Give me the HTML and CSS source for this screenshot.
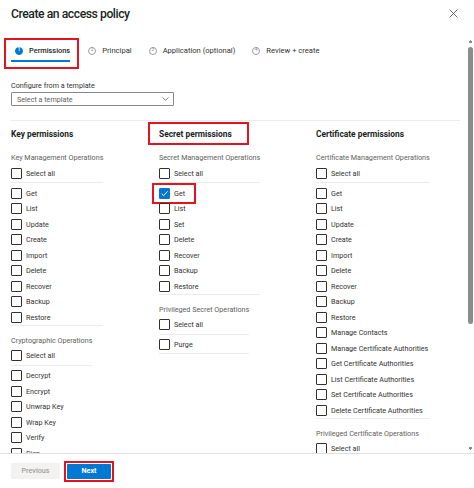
FILE: index.html
```html
<!DOCTYPE html>
<html lang="en">
<head>
<meta charset="utf-8">
<title>Create an access policy</title>
<link rel="stylesheet" href="styles.css">
</head>
<body>
<div class="dialog">
  <header class="header">
    <h1 class="title">Create an access policy</h1>
    <button class="close" aria-label="Close">
      <svg width="9" height="9" viewBox="0 0 9 9"><path d="M0.5 0.5 L8.5 8.5 M8.5 0.5 L0.5 8.5" stroke="#605e5c" stroke-width="0.9" fill="none"/></svg>
    </button>
  </header>

  <div class="body-area">
    <div class="scroll">
      <nav class="steps">
        <div class="mark step-mark">
          <div class="step active"><span class="num">1</span><span>Permissions</span></div>
        </div>
        <div class="step plain"><span class="num">2</span><span>Principal</span></div>
        <div class="step plain"><span class="num">3</span><span>Application (optional)</span></div>
        <div class="step plain"><span class="num">4</span><span>Review + create</span></div>
      </nav>

      <div class="template">
        <div class="field-label">Configure from a template</div>
        <div class="select">
          <span>Select a template</span>
          <svg width="7" height="4" viewBox="0 0 7 4"><path d="M0.5 0.5 L3.5 3.3 L6.5 0.5" stroke="#605e5c" stroke-width="0.8" fill="none"/></svg>
        </div>
      </div>

      <div class="divider"></div>

      <div class="perms">
        <section class="col">
          <div class="col-head"><h2>Key permissions</h2></div>
          <div class="group first">
            <div class="group-label">Key Management Operations</div>
            <div class="select-all"><div class="row"><span class="box"></span>Select all</div></div>
            <div class="list">
              <div class="row"><span class="box"></span>Get</div>
              <div class="row"><span class="box"></span>List</div>
              <div class="row"><span class="box"></span>Update</div>
              <div class="row"><span class="box"></span>Create</div>
              <div class="row"><span class="box"></span>Import</div>
              <div class="row"><span class="box"></span>Delete</div>
              <div class="row"><span class="box"></span>Recover</div>
              <div class="row"><span class="box"></span>Backup</div>
              <div class="row"><span class="box"></span>Restore</div>
            </div>
          </div>
          <div class="group">
            <div class="group-label">Cryptographic Operations</div>
            <div class="select-all"><div class="row"><span class="box"></span>Select all</div></div>
            <div class="list">
              <div class="row"><span class="box"></span>Decrypt</div>
              <div class="row"><span class="box"></span>Encrypt</div>
              <div class="row"><span class="box"></span>Unwrap Key</div>
              <div class="row"><span class="box"></span>Wrap Key</div>
              <div class="row"><span class="box"></span>Verify</div>
              <div class="row"><span class="box"></span>Sign</div>
            </div>
          </div>
        </section>

        <section class="col">
          <div class="col-head mark head-mark"><h2>Secret permissions</h2></div>
          <div class="group first">
            <div class="group-label">Secret Management Operations</div>
            <div class="select-all"><div class="row"><span class="box"></span>Select all</div></div>
            <div class="list">
              <div class="mark row-mark">
                <div class="row"><span class="box checked"><svg width="9" height="9" viewBox="0 0 9 9"><path d="M1.6 4.7 L3.6 6.6 L7.6 2.4" stroke="#fff" stroke-width="1" fill="none"/></svg></span>Get</div>
              </div>
              <div class="row"><span class="box"></span>List</div>
              <div class="row"><span class="box"></span>Set</div>
              <div class="row"><span class="box"></span>Delete</div>
              <div class="row"><span class="box"></span>Recover</div>
              <div class="row"><span class="box"></span>Backup</div>
              <div class="row"><span class="box"></span>Restore</div>
            </div>
          </div>
          <div class="group">
            <div class="group-label">Privileged Secret Operations</div>
            <div class="select-all"><div class="row"><span class="box"></span>Select all</div></div>
            <div class="list">
              <div class="row"><span class="box"></span>Purge</div>
            </div>
          </div>
        </section>

        <section class="col">
          <div class="col-head"><h2>Certificate permissions</h2></div>
          <div class="group first">
            <div class="group-label">Certificate Management Operations</div>
            <div class="select-all"><div class="row"><span class="box"></span>Select all</div></div>
            <div class="list">
              <div class="row"><span class="box"></span>Get</div>
              <div class="row"><span class="box"></span>List</div>
              <div class="row"><span class="box"></span>Update</div>
              <div class="row"><span class="box"></span>Create</div>
              <div class="row"><span class="box"></span>Import</div>
              <div class="row"><span class="box"></span>Delete</div>
              <div class="row"><span class="box"></span>Recover</div>
              <div class="row"><span class="box"></span>Backup</div>
              <div class="row"><span class="box"></span>Restore</div>
              <div class="row"><span class="box"></span>Manage Contacts</div>
              <div class="row"><span class="box"></span>Manage Certificate Authorities</div>
              <div class="row"><span class="box"></span>Get Certificate Authorities</div>
              <div class="row"><span class="box"></span>List Certificate Authorities</div>
              <div class="row"><span class="box"></span>Set Certificate Authorities</div>
              <div class="row"><span class="box"></span>Delete Certificate Authorities</div>
            </div>
          </div>
          <div class="group">
            <div class="group-label">Privileged Certificate Operations</div>
            <div class="select-all"><div class="row"><span class="box"></span>Select all</div></div>
          </div>
        </section>
      </div>
    </div>

    <div class="scrollbar" aria-hidden="true">
      <div class="sb-arrow sb-up"></div>
      <div class="sb-track"><div class="sb-thumb"></div></div>
      <div class="sb-arrow sb-down"></div>
    </div>
  </div>

  <footer class="footer">
    <button class="btn btn-prev" disabled>Previous</button>
    <div class="mark btn-mark"><button class="btn btn-next">Next</button></div>
  </footer>
</div>
</body>
</html>
```

FILE: styles.css
```css
html, body {
  margin: 0;
  padding: 0;
  background: #ffffff;
}

body {
  font-family: Roboto, "Noto Sans", sans-serif;
  color: #323130;
}

.dialog {
  width: 474px;
  height: 488px;
  display: flex;
  flex-direction: column;
  overflow: hidden;
}

/* Header */
.header {
  height: 37px;
  flex: none;
  display: flex;
  justify-content: space-between;
  align-items: flex-start;
  padding: 0 16px 0 11px;
  box-sizing: border-box;
}

.title {
  margin: 0;
  padding-top: 5px;
  font-size: 12.2px;
  letter-spacing: -0.45px;
  line-height: 18px;
  font-weight: 500;
  color: #201f1e;
}

.close {
  border: 0;
  background: none;
  padding: 0;
  margin-top: 9px;
  width: 9px;
  height: 9px;
  display: flex;
}

/* Body area: content + scrollbar */
.body-area {
  height: 416px;
  flex: none;
  display: flex;
}

.scroll {
  flex: 1;
  min-width: 0;
  overflow: hidden;
  padding: 1px 7px 0 11px;
}

.scrollbar {
  width: 7px;
  flex: none;
  display: flex;
  flex-direction: column;
  align-items: center;
}

.sb-arrow {
  height: 9px;
  width: 5px;
  flex: none;
  background-repeat: no-repeat;
  background-size: 5px 3px;
  background-position: center;
}

.sb-up {
  background-image: conic-gradient(from 145deg at 50% 0%, #8a8a8a 0 70deg, transparent 70deg);
}

.sb-down {
  background-image: conic-gradient(from -35deg at 50% 100%, #8a8a8a 0 70deg, transparent 70deg);
}

.sb-track {
  flex: 1;
  width: 5px;
  padding-top: 1px;
}

.sb-thumb {
  height: 277px;
  width: 5px;
  border-radius: 2.5px;
  background: #8c8c8c;
}

/* Red annotation boxes */
.mark {
  border: 2px solid #e3141f;
  box-sizing: border-box;
}

/* Steps */
.steps {
  display: flex;
  align-items: flex-start;
  margin-left: -7px;
  height: 31px;
}

.step-mark {
  padding: 1px 7px 5px 5px;
  margin-right: 9px;
}

.step {
  display: flex;
  align-items: center;
  gap: 6px;
  height: 19px;
  font-size: 7.6px;
  color: #323130;
  white-space: nowrap;
}

.step.active {
  padding-left: 4px;
  border-bottom: 2px solid #0078d4;
  font-size: 7.4px;
  font-weight: 500;
  color: #201f1e;
}

.step.plain {
  margin-top: 3px;
  margin-right: 17px;
}

.num {
  width: 8px;
  height: 8px;
  border-radius: 50%;
  border: 1px solid #a19f9d;
  box-sizing: border-box;
  font-size: 4.5px;
  line-height: 1;
  display: flex;
  align-items: center;
  justify-content: center;
  color: #8a8886;
  font-weight: 400;
}

.step.active .num {
  background: #0078d4;
  border-color: #0078d4;
  color: #ffffff;
  font-weight: 700;
}

/* Template */
.template {
  margin-top: 12px;
}

.field-label {
  font-size: 7.2px;
  line-height: 10px;
  color: #323130;
}

.select {
  margin-top: 1px;
  width: 163px;
  height: 14px;
  box-sizing: border-box;
  border: 1px solid #8a8886;
  border-radius: 1px;
  display: flex;
  align-items: center;
  justify-content: space-between;
  padding: 0 4px 0 5px;
  font-size: 7.2px;
  color: #605e5c;
}

.divider {
  margin-top: 14px;
  border-top: 1px solid #edebe9;
}

/* Permission columns */
.perms {
  display: grid;
  grid-template-columns: 148px 157px 1fr;
  margin-top: 1px;
}

.col-head {
  height: 23px;
  display: flex;
  align-items: center;
}

.col-head h2 {
  margin: 0;
  font-size: 8.4px;
  font-weight: 700;
  color: #201f1e;
}

.head-mark {
  margin-left: -11px;
  padding-left: 9px;
  width: 101px;
}

.group {
  width: max-content;
  margin-top: 10px;
}

.group.first {
  margin-top: 8px;
}

.group-label {
  font-size: 7.2px;
  line-height: 10px;
  color: #605e5c;
  margin-bottom: 2.25px;
}

.select-all {
  padding-bottom: 1px;
  border-bottom: 1px solid #edebe9;
}

.list {
  margin-top: 2.5px;
  border-bottom: 1px solid #edebe9;
}

.row {
  height: 15.5px;
  display: flex;
  align-items: center;
  gap: 4px;
  font-size: 7.2px;
  color: #323130;
  white-space: nowrap;
}

.box {
  width: 11px;
  height: 11px;
  box-sizing: border-box;
  border: 1px solid #323130;
  border-radius: 1px;
  flex: none;
  display: flex;
  align-items: center;
  justify-content: center;
}

.box.checked {
  background: #0078d4;
  border-color: #0078d4;
}

.row-mark {
  width: fit-content;
  margin: -2px 0 -3.5px -7px;
  padding: 0 9px 1.5px 5px;
}

/* Footer */
.footer {
  flex: 1;
  border-top: 1px solid #e1dfdd;
  display: flex;
  align-items: center;
  gap: 4px;
  padding-left: 11px;
}

.btn {
  border: 0;
  border-radius: 1px;
  padding: 0;
  font-family: inherit;
  font-size: 7.2px;
  line-height: 10px;
  font-weight: 500;
}

.btn-prev {
  width: 49px;
  height: 16px;
  background: #f3f2f1;
  color: #a19f9d;
}

.btn-mark {
  padding: 1px;
  display: flex;
}

.btn-next {
  width: 44px;
  height: 15px;
  background: #0078d4;
  color: #ffffff;
  font-weight: 700;
}
```
